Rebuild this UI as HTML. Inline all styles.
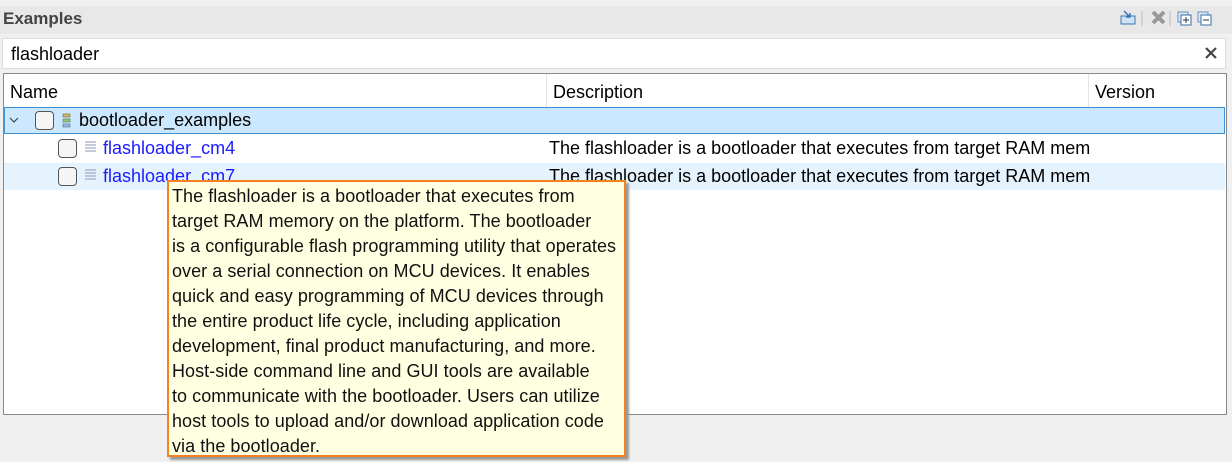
<!DOCTYPE html>
<html><head><style>
body{margin:0;width:1232px;height:462px;background:#f0f0f0;font-family:"Liberation Sans",sans-serif;position:relative;overflow:hidden;color:#000}
.abs{position:absolute}
.t{font-size:18px;white-space:nowrap}
.cb{position:absolute;width:17px;height:17px;border:1px solid #555;border-radius:4px;background:#f5f5f5}
</style></head><body>
<div class="abs" style="left:0;top:6px;width:1232px;height:28px;background:#e8e8e8"></div>
<div class="abs t" style="left:3px;top:9px;font-weight:bold;color:#444;font-size:17px">Examples</div>
<svg class="abs" style="left:1118px;top:8px" width="110" height="22">
<rect x="3" y="8" width="14" height="8" fill="#cfe3f5" stroke="#3a78b5"/>
<path d="M6 3l6 6M12 5v4h-4" stroke="#3a78b5" fill="none" stroke-width="1.5"/>
<line x1="24" y1="3" x2="24" y2="18" stroke="#bbb"/>
<path d="M35 4l11 11M46 4L35 15" stroke="#999" stroke-width="4"/>
<line x1="52" y1="3" x2="52" y2="18" stroke="#bbb"/>
<rect x="60" y="4" width="10" height="10" fill="#dbe8f5" stroke="#6a8fbf"/><rect x="63" y="7" width="10" height="10" fill="#fff" stroke="#3a6ea5"/><path d="M65 12h6M68 9v6" stroke="#234"/>
<rect x="80" y="4" width="10" height="10" fill="#dbe8f5" stroke="#6a8fbf"/><rect x="83" y="7" width="10" height="10" fill="#fff" stroke="#3a6ea5"/><path d="M85 12h6" stroke="#234"/>
</svg>
<div class="abs" style="left:2px;top:38px;width:1222px;height:29px;background:#fff;border:1px solid #ddd"></div>
<div class="abs t" style="left:11px;top:44px;">flashloader</div>
<svg class="abs" style="left:1204px;top:46px" width="14" height="14"><path d="M2 2l10 10M12 2L2 12" stroke="#444" stroke-width="2.2"/></svg>
<div class="abs" style="left:3px;top:73px;width:1222px;height:340px;background:#fff;border:1px solid #888"></div>
<div class="abs" style="left:546px;top:74px;width:1px;height:33px;background:#e3e3e3"></div>
<div class="abs" style="left:1088px;top:74px;width:1px;height:33px;background:#e3e3e3"></div>
<div class="abs t" style="left:10px;top:82px">Name</div>
<div class="abs t" style="left:553px;top:82px">Description</div>
<div class="abs t" style="left:1095px;top:82px">Version</div>
<div class="abs" style="left:4px;top:107px;width:1219px;height:25px;background:#cce8ff;border:1px solid #3d8fd6"></div>
<div class="abs" style="left:4px;top:163px;width:1221px;height:27px;background:#e5f3ff"></div>
<svg class="abs" style="left:9px;top:116px" width="10" height="8"><path d="M1 2l4 4 4-4" stroke="#333" fill="none"/></svg>
<div class="cb" style="left:35px;top:111px"></div>
<svg class="abs" style="left:62px;top:112px" width="10" height="16"><rect x="1" y="2" width="7" height="3" fill="#cdb96a" stroke="#7a6a2a" stroke-width=".6"/><rect x="1" y="7" width="7" height="3" fill="#9bc48b" stroke="#4b7a3a" stroke-width=".6"/><rect x="1" y="12" width="7" height="3" fill="#9fb8de" stroke="#4a6a9a" stroke-width=".6"/></svg>
<div class="abs t" style="left:79px;top:110px">bootloader_examples</div>
<div class="cb" style="left:58px;top:139px"></div>
<div class="cb" style="left:58px;top:167px"></div>
<svg class="abs" style="left:85px;top:141px" width="12" height="12"><path d="M0 1h11M0 4h11M0 7h11M0 10h11" stroke="#8a9ab8"/></svg>
<svg class="abs" style="left:85px;top:169px" width="12" height="12"><path d="M0 1h11M0 4h11M0 7h11M0 10h11" stroke="#8a9ab8"/></svg>
<div class="abs t" style="left:103px;top:138px;color:#1a1aff">flashloader_cm4</div>
<div class="abs t" style="left:103px;top:166px;color:#1a1aff">flashloader_cm7</div>
<div class="abs t" style="left:549px;top:138px">The flashloader is a bootloader that executes from target RAM mem</div>
<div class="abs t" style="left:549px;top:166px">The flashloader is a bootloader that executes from target RAM mem</div>
<div class="abs" style="left:167px;top:180px;width:455px;height:273px;background:#ffffe1;border:2px solid #f58220;box-shadow:3px 3px 2px #999"></div>
<div class="abs t" style="left:172px;top:184px;line-height:25px;color:#111;letter-spacing:0.05px">The flashloader is a bootloader that executes from<br>target RAM memory on the platform. The bootloader<br>is a configurable flash programming utility that operates<br>over a serial connection on MCU devices. It enables<br>quick and easy programming of MCU devices through<br>the entire product life cycle, including application<br>development, final product manufacturing, and more.<br>Host-side command line and GUI tools are available<br>to communicate with the bootloader. Users can utilize<br>host tools to upload and/or download application code<br>via the bootloader.</div>
</body></html>
